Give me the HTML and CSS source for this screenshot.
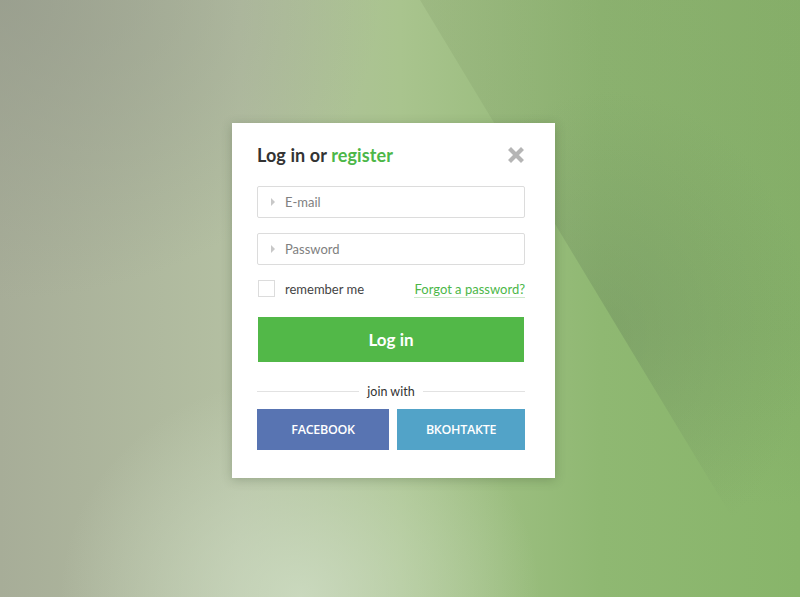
FILE: index.html
```html
<!DOCTYPE html>
<html lang="en">
<head>
    <meta charset="UTF-8">
    <title>Log in or register</title>
    <link rel="stylesheet" href="styles.css">
</head>
<body>
<div class="wall">
    <div class="login">
        <div class="login-head">
            <h2>Log in or <a href="#" class="green">register</a></h2>
            <a href="#" class="close" title="Close">
                <svg width="16" height="16" viewBox="0 0 16 16">
                    <path d="M3 3 L13 13 M13 3 L3 13" stroke="#b5b5b5" stroke-width="4.2" stroke-linecap="square"/>
                </svg>
            </a>
        </div>
        <div class="field">
            <span class="caret"></span>
            <input type="text" placeholder="E-mail">
        </div>
        <div class="field">
            <span class="caret"></span>
            <input type="password" placeholder="Password">
        </div>
        <div class="options">
            <label class="remember"><span class="box"></span>remember me</label>
            <a href="#" class="forgot">Forgot a password?</a>
        </div>
        <button class="btn-login">Log in</button>
        <div class="join"><span>join with</span></div>
        <div class="socials">
            <a href="#" class="fb">FACEBOOK</a>
            <a href="#" class="vk">ВКОНТАКТЕ</a>
        </div>
    </div>
</div>
</body>
</html>
```

FILE: styles.css
```css
html, body {
    width: 100%;
    height: 100%;
    margin: 0;
    padding: 0;
    overflow: hidden;
}

body {
    font-family: Lato, "Open Sans", sans-serif;
    background:
        radial-gradient(ellipse 240px 220px at 300px 597px, rgba(208, 222, 198, 0.8), rgba(208, 222, 198, 0) 100%),
        radial-gradient(ellipse 380px 300px at 0 0, rgba(150, 155, 140, 0.75), rgba(150, 155, 140, 0) 100%),
        linear-gradient(to right, #a7ad98 0%, #b4c0a2 30%, #a9c48e 50%, #8fb872 75%, #88b56a 100%);
}

.wall {
    position: relative;
    width: 100%;
    height: 100%;
    padding-top: 123px;
    box-sizing: border-box;
}

.wall::before {
    content: "";
    position: absolute;
    inset: 0;
    background: radial-gradient(ellipse 200px 240px at 610px 330px, rgba(110, 140, 95, 0.35), rgba(110, 140, 95, 0)),
        linear-gradient(to bottom, rgba(125, 150, 100, 0.22), rgba(115, 150, 95, 0.2) 55%, rgba(120, 170, 90, 0) 85%);
    clip-path: polygon(420px 0, 800px 0, 800px 597px, 780px 597px);
}

.login {
    position: relative;
    width: 268px;
    margin-left: 232px;
    padding: 22px 30px 28px 25px;
    background: #fff;
    box-shadow: 0 2px 10px rgba(40, 60, 30, 0.25);
}

.login-head {
    display: flex;
    justify-content: space-between;
    align-items: center;
    height: 20px;
    margin-bottom: 21px;
}

.login-head h2 {
    margin: 0;
    font-size: 18px;
    font-weight: 700;
    color: #333;
    letter-spacing: 0.1px;
}

.green {
    color: #4cb748;
    text-decoration: none;
}

.close {
    display: block;
    width: 16px;
    height: 16px;
    margin-right: 1px;
}

.field {
    display: flex;
    align-items: center;
    height: 30px;
    border: 1px solid #dcdcdc;
    border-radius: 2px;
    margin-bottom: 15px;
}

.caret {
    width: 0;
    height: 0;
    margin-left: 13px;
    margin-right: 10px;
    border-top: 4px solid transparent;
    border-bottom: 4px solid transparent;
    border-left: 4px solid #c8c8c8;
}

.field input {
    flex: 1;
    border: 0;
    outline: none;
    font-family: Lato, sans-serif;
    font-size: 13px;
    color: #444;
    padding: 0;
    background: transparent;
}

.field input::placeholder {
    color: #808080;
}

.options {
    display: flex;
    justify-content: space-between;
    align-items: center;
    margin-top: 1px;
    height: 17px;
}

.remember {
    display: flex;
    align-items: center;
    font-size: 13px;
    color: #444;
}

.box {
    width: 15px;
    height: 15px;
    border: 1px solid #dcdcdc;
    margin-left: 1px;
    margin-right: 10px;
}

.forgot {
    font-size: 13px;
    color: #4cb748;
    text-decoration: none;
    border-bottom: 1px solid #cde9cb;
    line-height: 15px;
    margin-top: 2px;
}

.btn-login {
    display: block;
    width: 266px;
    height: 45px;
    margin: 20px 0 0 1px;
    border: 0;
    background: #52b848;
    color: #fff;
    font-family: Lato, sans-serif;
    font-size: 17px;
    font-weight: 700;
    cursor: pointer;
}

.join {
    display: flex;
    align-items: center;
    gap: 8px;
    margin-top: 21px;
    height: 16px;
    font-size: 12.5px;
    color: #333;
}

.join::before, .join::after {
    content: "";
    flex: 1;
    height: 1px;
    background: #e2e2e2;
}

.socials {
    display: flex;
    gap: 8px;
    margin-top: 10px;
}

.socials a {
    display: flex;
    align-items: center;
    justify-content: center;
    height: 41px;
    color: #fff;
    text-decoration: none;
    font-family: "Open Sans", sans-serif;
    font-size: 12.5px;
    font-weight: 600;
    letter-spacing: -0.3px;
}

.fb {
    width: 132px;
    background: #5874b2;
}

.vk {
    width: 128px;
    background: #52a3c8;
}
```
